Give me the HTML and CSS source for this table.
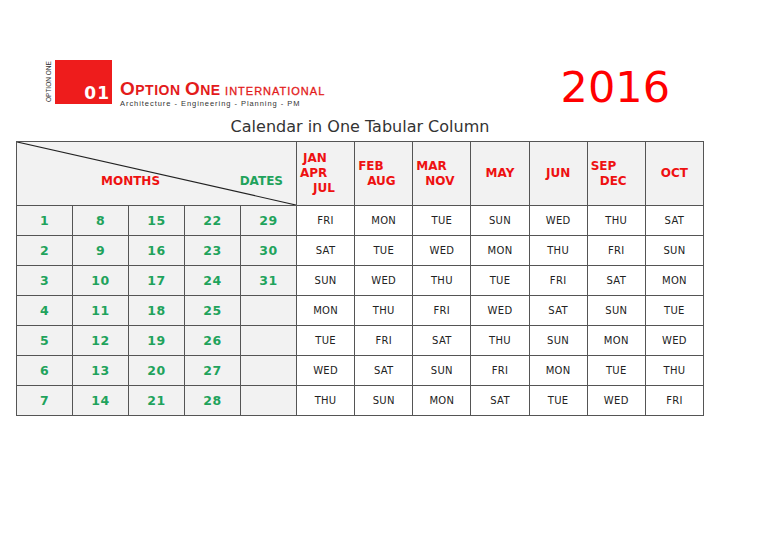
FILE: index.html
```html
<!DOCTYPE html>
<html>
<head>
<meta charset="utf-8">
<link rel="stylesheet" href="styles.css">
</head>
<body>
<div class="page">
  <div class="top">
    <div class="logo">
      <div class="vert">OPTION ONE</div>
      <div class="square"><span class="num">01</span></div>
      <div class="brand">
        <div class="name"><span class="big">O</span>PTION <span class="big">O</span>NE <span class="intl">INTERNATIONAL</span></div>
        <div class="tag">Architecture - Engineering - Planning - PM</div>
      </div>
    </div>
    <div class="year">2016</div>
  </div>
  <div class="title">Calendar in One Tabular Column</div>
  <table class="cal">
    <tr class="head">
      <th colspan="5" class="corner">
        <svg class="diag" viewBox="0 0 279 64" preserveAspectRatio="none"><line x1="0" y1="0" x2="279" y2="64" stroke="#222" stroke-width="1.2"/></svg>
        <span class="lbl-months">MONTHS</span>
        <span class="lbl-dates">DATES</span>
      </th>
      <th class="mh"><span class="l1">JAN</span><span class="l2">APR</span><span class="l3">JUL</span></th>
      <th class="mh"><span class="f1">FEB</span><span class="f2">AUG</span></th>
      <th class="mh"><span class="f1">MAR</span><span class="f2">NOV</span></th>
      <th class="mh c">MAY</th>
      <th class="mh c">JUN</th>
      <th class="mh"><span class="f1">SEP</span><span class="f2">DEC</span></th>
      <th class="mh c">OCT</th>
    </tr>
    <tr><td class="d">1</td><td class="d">8</td><td class="d">15</td><td class="d">22</td><td class="d">29</td><td class="w first">FRI</td><td class="w">MON</td><td class="w">TUE</td><td class="w">SUN</td><td class="w">WED</td><td class="w">THU</td><td class="w">SAT</td></tr>
    <tr><td class="d">2</td><td class="d">9</td><td class="d">16</td><td class="d">23</td><td class="d">30</td><td class="w first">SAT</td><td class="w">TUE</td><td class="w">WED</td><td class="w">MON</td><td class="w">THU</td><td class="w">FRI</td><td class="w">SUN</td></tr>
    <tr><td class="d">3</td><td class="d">10</td><td class="d">17</td><td class="d">24</td><td class="d">31</td><td class="w first">SUN</td><td class="w">WED</td><td class="w">THU</td><td class="w">TUE</td><td class="w">FRI</td><td class="w">SAT</td><td class="w">MON</td></tr>
    <tr><td class="d">4</td><td class="d">11</td><td class="d">18</td><td class="d">25</td><td class="d"></td><td class="w first">MON</td><td class="w">THU</td><td class="w">FRI</td><td class="w">WED</td><td class="w">SAT</td><td class="w">SUN</td><td class="w">TUE</td></tr>
    <tr><td class="d">5</td><td class="d">12</td><td class="d">19</td><td class="d">26</td><td class="d"></td><td class="w first">TUE</td><td class="w">FRI</td><td class="w">SAT</td><td class="w">THU</td><td class="w">SUN</td><td class="w">MON</td><td class="w">WED</td></tr>
    <tr><td class="d">6</td><td class="d">13</td><td class="d">20</td><td class="d">27</td><td class="d"></td><td class="w first">WED</td><td class="w">SAT</td><td class="w">SUN</td><td class="w">FRI</td><td class="w">MON</td><td class="w">TUE</td><td class="w">THU</td></tr>
    <tr><td class="d">7</td><td class="d">14</td><td class="d">21</td><td class="d">28</td><td class="d"></td><td class="w first">THU</td><td class="w">SUN</td><td class="w">MON</td><td class="w">SAT</td><td class="w">TUE</td><td class="w">WED</td><td class="w">FRI</td></tr>
  </table>
</div>
</body>
</html>
```
FILE: styles.css
```css
html, body { margin: 0; padding: 0; background: #fff; }
body { font-family: "DejaVu Sans", sans-serif; width: 768px; height: 543px; overflow: hidden; }
.page { padding: 60px 0 0 16px; }
.top { display: flex; align-items: flex-start; height: 53px; }
.logo { display: flex; align-items: flex-start; margin-left: 28px; }
.vert {
  writing-mode: vertical-rl; transform: rotate(180deg);
  font-family: "Liberation Sans", sans-serif; font-size: 6.5px; color: #333;
  height: 44px; text-align: center; width: 9px; margin-right: 2px;
  white-space: nowrap; line-height: 9px;
}
.square { width: 57px; height: 44px; background: #ee1c1c; position: relative; }
.num { position: absolute; right: 2px; bottom: 1px; color: #fff; font-family: "DejaVu Sans", sans-serif; font-weight: bold; font-size: 17px; letter-spacing: 1px; }
.brand { margin-left: 8px; margin-top: 20px; }
.name { color: #e31b1b; font-family: "Liberation Sans", sans-serif; font-weight: bold; font-size: 14px; line-height: 17px; letter-spacing: 0.5px; white-space: nowrap; }
.name .big { font-size: 19px; }
.name .intl { font-size: 11px; font-weight: normal; letter-spacing: 1px; -webkit-text-stroke: 0.3px #e31b1b; }
.tag { font-family: "Liberation Sans", sans-serif; font-size: 7.5px; color: #333; letter-spacing: 0.95px; line-height: 9px; margin-top: -1px; white-space: nowrap; }
.year { margin-left: auto; margin-right: 98px; color: #f00; font-size: 43px; line-height: 52px; margin-top: 1px; }
.title { width: 688px; text-align: center; font-size: 16px; color: #333; line-height: 20px; margin-top: 4px; margin-bottom: 4px; }
.cal { border-collapse: collapse; width: 688px; table-layout: fixed; }
.cal td, .cal th { border: 1px solid #555; padding: 0; }
.head th { height: 63px; background: #f2f2f2; color: #ee1111; font-weight: bold; font-size: 12px; vertical-align: middle; }
.corner { position: relative; width: 279px; }
.diag { position: absolute; left: 0; top: 0; width: 100%; height: 100%; }
.lbl-months { position: absolute; left: 84px; top: 32px; color: #ee1111; font-size: 12px; }
.lbl-dates { position: absolute; right: 13px; top: 32px; color: #1fa35c; font-size: 12px; }
.mh { text-align: left; line-height: 15px; }
.mh.c { text-align: center; }
.mh span { display: block; }
.l1 { padding-left: 6px; }
.l2 { padding-left: 3px; }
.l3 { padding-left: 16px; }
.f1 { padding-left: 3px; }
.f2 { padding-left: 12px; }
.cal tr td { height: 29px; }
.d { background: #f2f2f2; color: #1fa35c; font-weight: bold; font-size: 12.5px; text-align: center; letter-spacing: 0.5px; }
.w { background: #fff; color: #222; font-size: 10px; text-align: center; letter-spacing: 0.3px; }
.first, .corner + .mh { border-left: 1px solid #111; }
```
